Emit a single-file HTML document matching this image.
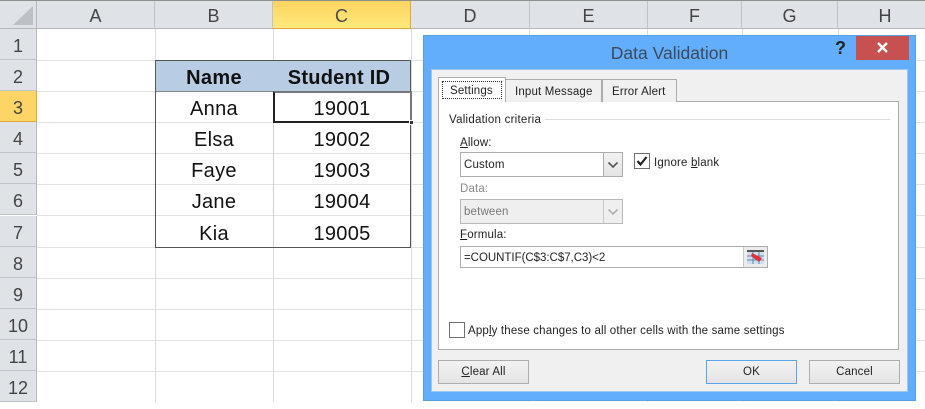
<!DOCTYPE html>
<html><head><meta charset="utf-8">
<style>
html,body{margin:0;padding:0;background:#fff}
#p{position:relative;width:925px;height:409px;overflow:hidden;background:#fff;font-family:"Liberation Sans",sans-serif}
#p div{position:absolute;box-sizing:border-box;white-space:nowrap}
.h{background:#dfe3e8;color:#444;font-size:18px;text-align:center;top:1px;height:28px;line-height:31px;border-right:1px solid #c0c4c9;border-bottom:1px solid #b4b8bd}
.r{background:#dfe3e8;color:#444;font-size:18px;text-align:center;left:0;width:37px;height:31px;line-height:35px;border-right:1px solid #b4b8bd;border-bottom:1px solid #c0c4c9}
.gv{top:29px;width:1px;height:373px;background:#dcdcdc}
.gh{left:37px;width:888px;height:1px;background:#e2e2e2}
.c{font-size:20px;letter-spacing:.3px;color:#111;text-align:center;height:31px;line-height:35px}
.d{font-size:11.5px;letter-spacing:.16px;color:#222;line-height:14px}
.btn{top:360px;height:24px;background:linear-gradient(#f2f2f2,#e4e4e4);border:1px solid #adadad;font-size:11.5px;letter-spacing:.15px;line-height:22px;text-align:center;color:#222}
u{text-decoration:underline}
</style></head><body><div id="p">
<div style="left:0;top:0;width:925px;height:1px;background:#8f8f8f"></div>
<div style="left:0;top:1px;width:37px;height:28px;background:#dfe3e8;border-right:1px solid #b4b8bd;border-bottom:1px solid #b4b8bd"></div>
<svg style="position:absolute;left:12px;top:5px" width="23" height="21"><polygon points="21,1 21,20 1,20" fill="#bcc1c6"/></svg>
<div class="h" style="left:37px;width:118px">A</div>
<div class="h" style="left:155px;width:118px">B</div>
<div class="h" style="left:273px;width:138px;background:linear-gradient(#fdd45f,#ffe97c);border-right:1px solid #e2a83a;border-bottom:1px solid #e2a83a;color:#4a4a4a">C</div>
<div class="h" style="left:411px;width:119px">D</div>
<div class="h" style="left:530px;width:118px">E</div>
<div class="h" style="left:648px;width:94px">F</div>
<div class="h" style="left:742px;width:96px">G</div>
<div class="h" style="left:838px;width:94px;border-right:0">H</div>

<div class="r" style="top:29px">1</div>
<div class="r" style="top:60px">2</div>
<div class="r" style="top:91px;background:#fdd466;border-bottom:1px solid #e2a83a;border-right:1px solid #e2a83a">3</div>
<div class="r" style="top:122px">4</div>
<div class="r" style="top:153px">5</div>
<div class="r" style="top:184px">6</div>
<div class="r" style="top:216px">7</div>
<div class="r" style="top:247px">8</div>
<div class="r" style="top:278px">9</div>
<div class="r" style="top:309px">10</div>
<div class="r" style="top:340px">11</div>
<div class="r" style="top:371px">12</div>

<div class="gv" style="left:155px"></div><div class="gv" style="left:273px"></div><div class="gv" style="left:411px"></div>
<div class="gv" style="left:529px"></div><div class="gv" style="left:647px"></div><div class="gv" style="left:742px"></div><div class="gv" style="left:838px"></div>
<div class="gh" style="top:60px"></div><div class="gh" style="top:91px"></div><div class="gh" style="top:122px"></div><div class="gh" style="top:153px"></div><div class="gh" style="top:184px"></div><div class="gh" style="top:215px"></div><div class="gh" style="top:247px"></div><div class="gh" style="top:278px"></div><div class="gh" style="top:309px"></div><div class="gh" style="top:340px"></div><div class="gh" style="top:371px"></div>

<div style="left:155px;top:60px;width:256px;height:31px;background:#b8cce4"></div>
<div style="left:155px;top:60px;width:256px;height:188px;border:1px solid #555"></div>
<div style="left:273px;top:91px;width:1px;height:156px;background:#d0d0d0"></div>
<div style="left:156px;top:91px;width:254px;height:1px;background:#888"></div>
<div class="c" style="left:155px;top:61px;width:118px;font-weight:bold;font-size:20px;letter-spacing:.35px">Name</div>
<div class="c" style="left:270px;top:61px;width:138px;font-weight:bold;font-size:20px;letter-spacing:.25px">Student ID</div>
<div class="c" style="left:155px;top:92px;width:118px">Anna</div><div class="c" style="left:273px;top:92px;width:138px">19001</div>
<div class="c" style="left:155px;top:123px;width:118px">Elsa</div><div class="c" style="left:273px;top:123px;width:138px">19002</div>
<div class="c" style="left:155px;top:154px;width:118px">Faye</div><div class="c" style="left:273px;top:154px;width:138px">19003</div>
<div class="c" style="left:155px;top:185px;width:118px">Jane</div><div class="c" style="left:273px;top:185px;width:138px">19004</div>
<div class="c" style="left:155px;top:217px;width:118px">Kia</div><div class="c" style="left:273px;top:217px;width:138px">19005</div>
<div style="left:273px;top:91px;width:139px;height:32px;border:2px solid #222;border-top-color:#777;border-right-color:#777"></div>
<div style="left:409px;top:120px;width:5px;height:5px;background:#333;border:1px solid #fff"></div>

<div style="left:423px;top:35px;width:493px;height:366px;background:#62aefc;border:1px solid #5a9ee4"></div>
<div style="left:423px;top:44px;width:493px;height:30px;text-align:center;font-size:17.5px;line-height:18px;color:#3c4a5c">Data Validation</div>
<div style="left:835px;top:38px;font-size:18px;font-weight:bold;color:#222;line-height:20px">?</div>
<div style="left:856px;top:36px;width:53px;height:24px;background:#c75050"></div>
<svg style="position:absolute;left:876px;top:42px" width="13" height="11"><path d="M2 1L11 10M11 1L2 10" stroke="#fff" stroke-width="2.4"/></svg>

<div style="left:431px;top:69px;width:477px;height:323px;background:#f0f0f0;border:1px solid #9cc6f0"></div>
<div style="left:438px;top:101px;width:461px;height:249px;background:#fff;border:1px solid #acacac"></div>
<div style="left:505px;top:79px;width:97px;height:23px;background:#f0f0f0;border:1px solid #acacac;border-bottom:0"></div>
<div style="left:602px;top:79px;width:75px;height:23px;background:#f0f0f0;border:1px solid #acacac;border-bottom:0"></div>
<div style="left:438px;top:77px;width:68px;height:25px;background:#fff;border:1px solid #acacac;border-bottom:0"></div>
<div style="left:442px;top:81px;width:60px;height:18px;border:1px dotted #333"></div>
<div class="d" style="left:450px;top:84px">Settings</div>
<div class="d" style="left:515px;top:85px">Input Message</div>
<div class="d" style="left:612px;top:85px">Error Alert</div>

<div class="d" style="left:449px;top:113px;letter-spacing:.25px">Validation criteria</div>
<div style="left:545px;top:119px;width:345px;height:1px;background:#dcdcdc"></div>
<div class="d" style="left:460px;top:136px"><u>A</u>llow:</div>
<div style="left:460px;top:152px;width:163px;height:25px;background:#fff;border:1px solid #acacac"></div>
<div class="d" style="left:464px;top:158px">Custom</div>
<div style="left:603px;top:153px;width:19px;height:23px;background:linear-gradient(#f2f2f2,#e4e4e4);border-left:1px solid #acacac"></div>
<svg style="position:absolute;left:607px;top:161px" width="12" height="8"><path d="M1.5 1.5L6 6L10.5 1.5" fill="none" stroke="#555" stroke-width="1.6"/></svg>
<div style="left:634px;top:153px;width:16px;height:16px;background:#fff;border:1px solid #707070"></div>
<svg style="position:absolute;left:635px;top:154px" width="14" height="14"><path d="M2.5 7L5.5 10.5L11.5 3" fill="none" stroke="#222" stroke-width="2.2"/></svg>
<div class="d" style="left:654px;top:156px">Ignore <u>b</u>lank</div>

<div class="d" style="left:460px;top:182px;color:#8a8a8a">Data:</div>
<div style="left:460px;top:199px;width:163px;height:25px;background:#efefef;border:1px solid #b8b8b8"></div>
<div class="d" style="left:464px;top:205px;color:#777">between</div>
<div style="left:603px;top:200px;width:1px;height:23px;background:#c8c8c8"></div>
<svg style="position:absolute;left:607px;top:208px" width="12" height="8"><path d="M1.5 1.5L6 6L10.5 1.5" fill="none" stroke="#b0b0b0" stroke-width="1.6"/></svg>
<div class="d" style="left:460px;top:228px"><u>F</u>ormula:</div>
<div style="left:460px;top:246px;width:308px;height:22px;background:#fff;border:1px solid #acacac"></div>
<div class="d" style="left:464px;top:251px;letter-spacing:-.03px">=COUNTIF(C$3:C$7,C3)&lt;2</div>
<div style="left:743px;top:247px;width:24px;height:20px;background:#ececec;border-left:1px solid #c8c8c8"></div>
<svg style="position:absolute;left:747px;top:250px" width="17" height="14"><rect x="0" y="0" width="17" height="14" fill="#cfe0f0"/><rect x="0" y="0" width="17" height="2" fill="#555"/><path d="M0 6H17M0 10H17M6 2V14M12 2V14" stroke="#5f87ad" stroke-width="1"/><path d="M5 3L15 8L12 12L4 6Z" fill="#e0303a"/></svg>

<div style="left:449px;top:322px;width:16px;height:16px;background:#fff;border:1px solid #707070"></div>
<div class="d" style="left:468px;top:324px">App<u>l</u>y these changes to all other cells with the same settings</div>

<div class="btn" style="left:438px;width:91px"><u>C</u>lear All</div>
<div class="btn" style="left:706px;width:91px;border:1px solid #5aa5e8">OK</div>
<div class="btn" style="left:809px;width:91px">Cancel</div>
</div></body></html>
